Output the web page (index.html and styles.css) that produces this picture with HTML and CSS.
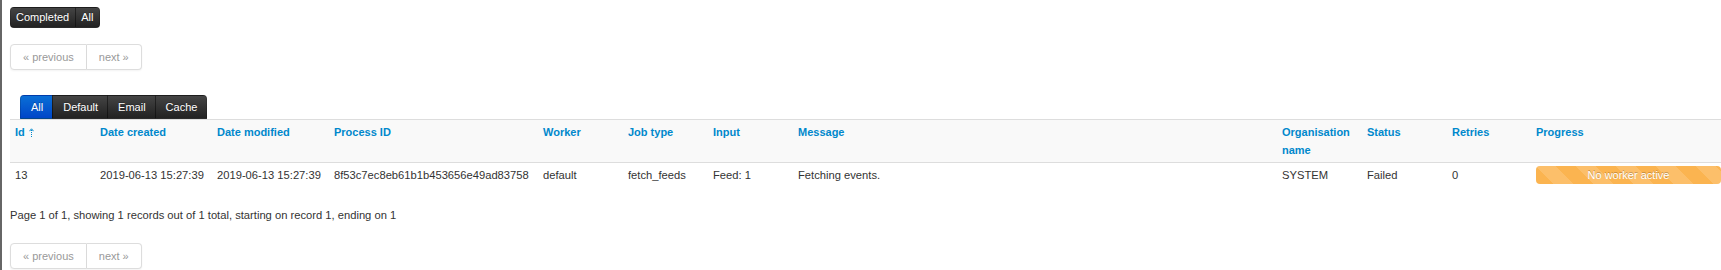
FILE: index.html
```html
<!DOCTYPE html>
<html lang="en">
<head>
  <meta charset="UTF-8" />
  <title>Jobs</title>
  <link rel="stylesheet" href="styles.css">
</head>
<body>

<div class="btn-group top-group">
  <button class="btn btn-inverse btn-mini">Completed</button>
  <button class="btn btn-inverse btn-mini">All</button>
</div>

<ul class="pagination">
  <li><span>&laquo; previous</span></li>
  <li><span>next &raquo;</span></li>
</ul>

<div class="btn-group filter-group">
  <button class="btn btn-primary btn-small">All</button>
  <button class="btn btn-inverse btn-small">Default</button>
  <button class="btn btn-inverse btn-small">Email</button>
  <button class="btn btn-inverse btn-small">Cache</button>
</div>

<table class="table">
  <colgroup>
    <col style="width:85px"><col style="width:117px"><col style="width:117px"><col style="width:209px">
    <col style="width:85px"><col style="width:85px"><col style="width:85px"><col style="width:484px">
    <col style="width:85px"><col style="width:85px"><col style="width:84px"><col style="width:195px">
  </colgroup>
  <thead>
    <tr>
      <th><a>Id</a><svg class="sort-icon" width="5" height="9" viewBox="0 0 5 9"><path d="M0.5 3.2 L2.5 0.8 L4.5 3.2" fill="none" stroke="#0088cc" stroke-width="1"/><line x1="2.5" y1="2" x2="2.5" y2="9" stroke="#0088cc" stroke-width="1" stroke-dasharray="1 1"/></svg></th>
      <th><a>Date created</a></th>
      <th><a>Date modified</a></th>
      <th><a>Process ID</a></th>
      <th><a>Worker</a></th>
      <th><a>Job type</a></th>
      <th><a>Input</a></th>
      <th><a>Message</a></th>
      <th><a>Organisation name</a></th>
      <th><a>Status</a></th>
      <th><a>Retries</a></th>
      <th><a>Progress</a></th>
    </tr>
  </thead>
  <tbody>
    <tr>
      <td>13</td>
      <td>2019-06-13 15:27:39</td>
      <td>2019-06-13 15:27:39</td>
      <td>8f53c7ec8eb61b1b453656e49ad83758</td>
      <td>default</td>
      <td>fetch_feeds</td>
      <td>Feed: 1</td>
      <td>Fetching events.</td>
      <td>SYSTEM</td>
      <td>Failed</td>
      <td>0</td>
      <td><div class="progress"><div class="bar" style="width:100%">No worker active</div></div></td>
    </tr>
  </tbody>
</table>

<p class="page-info">Page 1 of 1, showing 1 records out of 1 total, starting on record 1, ending on 1</p>

<ul class="pagination">
  <li><span>&laquo; previous</span></li>
  <li><span>next &raquo;</span></li>
</ul>

</body>
</html>
```

FILE: styles.css
```css
html, body {
  overflow: hidden;
}

body {
  margin: 0;
  padding: 7px 0 0 8px;
  min-height: 100vh;
  box-sizing: border-box;
  border-left: 2px solid #666;
  font-family: "Liberation Sans", Arial, sans-serif;
  font-size: 11.2px;
  line-height: 18px;
  color: #333;
  background: #fff;
}

.btn-group {
  display: flex;
}

.btn {
  font-family: inherit;
  color: #fff;
  border: 1px solid rgba(0,0,0,0.15);
  border-bottom-color: rgba(0,0,0,0.35);
  text-shadow: 0 -1px 0 rgba(0,0,0,0.25);
  margin: 0;
  cursor: pointer;
}

.btn + .btn {
  margin-left: -1px;
  border-left-color: rgba(0,0,0,0.45);
}

.btn-inverse {
  background: linear-gradient(#444, #222);
}

.btn-primary {
  background: linear-gradient(#0a6fd6, #0046c8);
}

.btn-mini {
  font-size: 11px;
  line-height: 15px;
  padding: 2px 6px 2px 5px;
}

.btn-small {
  font-size: 11px;
  line-height: 16px;
  padding: 3px 9px 3px 10px;
}

.top-group .btn:first-child {
  border-radius: 4px 0 0 4px;
}

.top-group .btn:last-child {
  border-radius: 0 4px 4px 0;
}

.filter-group {
  margin: 25px 0 0 10px;
}

.filter-group .btn:first-child {
  border-radius: 4px 0 0 0;
}

.filter-group .btn:last-child {
  border-radius: 0 4px 0 0;
}

.pagination {
  display: flex;
  list-style: none;
  margin: 16px 0 0 0;
  padding: 0;
  font-size: 11px;
}

.pagination li span {
  display: block;
  padding: 3px 12px;
  line-height: 18px;
  color: #999;
  background: #fff;
  border: 1px solid #ddd;
  box-shadow: 0 1px 2px rgba(0,0,0,0.05);
}

.pagination li + li span {
  border-left-width: 0;
}

.pagination li:first-child span {
  border-radius: 4px 0 0 4px;
}

.pagination li:last-child span {
  border-radius: 0 4px 4px 0;
}

.table {
  table-layout: fixed;
  width: 1716px;
  border-collapse: collapse;
  border-spacing: 0;
}

.table th,
.table td {
  padding: 3px 5px;
  text-align: left;
  vertical-align: top;
  border-top: 1px solid #ddd;
  line-height: 18px;
}

.table thead th {
  background: #f9f9f9;
  font-weight: bold;
  font-size: 11px;
}

.table th a {
  color: #0088cc;
  text-decoration: none;
}

.sort-icon {
  margin-left: 4px;
  vertical-align: -1px;
}

.progress {
  height: 18px;
  border-radius: 4px;
  overflow: hidden;
  background: #f7f7f7;
}

.bar {
  height: 18px;
  line-height: 18px;
  font-size: 11px;
  color: #fff;
  text-align: center;
  text-shadow: 0 -1px 0 rgba(0,0,0,0.25);
  background-color: #fbb450;
  background-image: linear-gradient(45deg, rgba(255,255,255,0.15) 25%, transparent 25%, transparent 50%, rgba(255,255,255,0.15) 50%, rgba(255,255,255,0.15) 75%, transparent 75%, transparent);
  background-size: 40px 40px;
}

.page-info {
  margin: 19px 0 0 0;
}

.page-info + .pagination {
  margin-top: 19px;
}
```
